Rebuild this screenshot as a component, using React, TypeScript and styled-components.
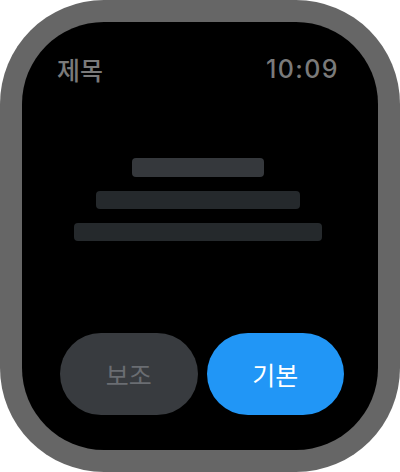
import React from "react";
import styled, { createGlobalStyle } from "styled-components";

const GlobalStyle = createGlobalStyle`
  html, body {
    margin: 0;
    padding: 0;
    background: #ffffff;
  }
  body {
    font-family: "Noto Sans CJK KR", "Noto Sans", sans-serif;
  }
`;

const Frame = styled.div`
  width: 400px;
  height: 472px;
  box-sizing: border-box;
  padding: 22px;
  background: #666666;
  border-radius: 104px;
  display: flex;
`;

const Screen = styled.div`
  flex: 1;
  background: #000000;
  border-radius: 82px;
  display: flex;
  flex-direction: column;
  overflow: hidden;
`;

const Header = styled.div`
  display: flex;
  justify-content: space-between;
  align-items: center;
  height: 26px;
  padding: 34px 40px 0 35px;
`;

const Title = styled.span`
  font-family: "Noto Sans CJK KR", sans-serif;
  font-size: 25px;
  font-weight: 500;
  line-height: 26px;
  color: #7a7a7a;
`;

const Clock = styled.span`
  font-family: Inter, "Liberation Sans", sans-serif;
  font-size: 25px;
  font-weight: 500;
  line-height: 26px;
  color: #7a7a7a;
  letter-spacing: 1.4px;
  margin-right: -1px;
`;

const Lines = styled.div`
  display: flex;
  flex-direction: column;
  align-items: center;
  gap: 14px;
  margin-top: 76px;
  margin-right: 4px;
`;

const Line = styled.div<{ $w: number; $h: number; $tone: string }>`
  width: ${(p) => p.$w}px;
  height: ${(p) => p.$h}px;
  border-radius: 4px;
  background: ${(p) => p.$tone};
`;

const Actions = styled.div`
  display: flex;
  gap: 9px;
  margin-top: auto;
  padding: 0 34px 35px 38px;
`;

const Button = styled.button<{ $primary?: boolean }>`
  flex: 1;
  height: 82px;
  border: none;
  border-radius: 41px;
  padding: 0;
  font-family: "Noto Sans CJK KR", sans-serif;
  font-size: 25px;
  font-weight: 400;
  background: ${(p) => (p.$primary ? "#2196f6" : "#383b3f")};
  color: ${(p) => (p.$primary ? "#ffffff" : "#6a6d72")};
`;

export default function App() {
  return (
    <>
      <GlobalStyle />
      <Frame>
        <Screen>
          <Header>
            <Title>제목</Title>
            <Clock>10:09</Clock>
          </Header>
          <Lines>
            <Line $w={132} $h={19} $tone="#35383c" />
            <Line $w={204} $h={18} $tone="#25292c" />
            <Line $w={248} $h={18} $tone="#25292c" />
          </Lines>
          <Actions>
            <Button>보조</Button>
            <Button $primary>기본</Button>
          </Actions>
        </Screen>
      </Frame>
    </>
  );
}
